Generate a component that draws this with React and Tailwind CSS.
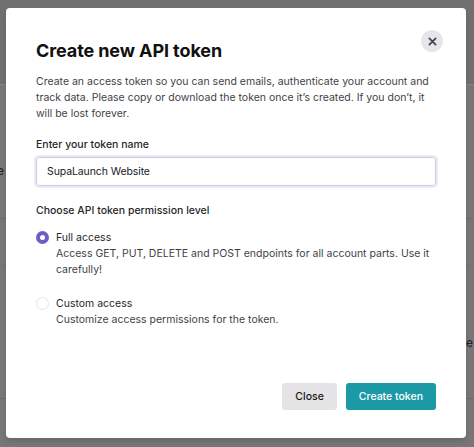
import React, { useState } from "react";

const CloseIcon = () => (
  <svg width="9" height="9" viewBox="0 0 10 10" fill="none">
    <path
      d="M1.5 1.5l7 7M8.5 1.5l-7 7"
      stroke="#3f3f46"
      strokeWidth="1.8"
      strokeLinecap="round"
    />
  </svg>
);

const Radio = ({ checked }) =>
  checked ? (
    <span className="mt-[1px] flex size-[13px] shrink-0 items-center justify-center rounded-full bg-[#6e5cc6]">
      <span className="size-[5px] rounded-full bg-white" />
    </span>
  ) : (
    <span className="mt-[1px] size-[13px] shrink-0 rounded-full border border-[#e4e4e7] bg-white" />
  );

const options = [
  {
    id: "full",
    title: "Full access",
    desc: "Access GET, PUT, DELETE and POST endpoints for all account parts. Use it carefully!",
  },
  {
    id: "custom",
    title: "Custom access",
    desc: "Customize access permissions for the token.",
  },
];

const App = () => {
  const [level, setLevel] = useState("full");
  const [name, setName] = useState("SupaLaunch Website");

  return (
    <div
      className="relative h-[447px] w-[474px] overflow-hidden bg-[#777777] pt-[8px] pl-[6px] text-[#27272a]"
      style={{ fontFamily: "Inter, 'Noto Sans', sans-serif" }}
    >
      {/* page behind the overlay */}
      <div className="absolute inset-x-0 top-0 h-[84px] bg-[#6f6f6f]" />
      <div className="absolute inset-x-0 top-[84px] h-px bg-[#858585]" />
      <div className="absolute inset-x-0 top-[218px] h-px bg-[#6a6a6a]" />
      <div className="absolute inset-x-0 top-[265px] h-px bg-[#707070]" />
      <div className="absolute inset-x-0 top-[398px] h-px bg-[#6a6a6a]" />
      <span className="absolute top-[162px] -left-[3px] text-[12px] text-[#222]">e</span>
      <span className="absolute top-[334px] left-[466px] text-[12px] text-[#222]">e</span>

      <div className="relative h-[430px] w-[460px] rounded-[4px] bg-white px-[30px] pt-[22px] text-[10.5px] leading-[16px] shadow-md">
        <div className="flex items-start justify-between">
          <h2 className="pt-[10px] text-[18px] leading-[22px] font-bold tracking-[-0.1px] text-[#111]">
            Create new API token
          </h2>
          <button className="-mr-[7px] flex size-[22px] items-center justify-center rounded-full bg-[#e6e6ea]">
            <CloseIcon />
          </button>
        </div>

        <p className="mt-[12px] text-[10.5px] whitespace-nowrap text-[#3f3f46]">
          Create an access token so you can send emails, authenticate your account and
          <br />
          track data. Please copy or download the token once it’s created. If you don’t, it
          <br />
          will be lost forever.
        </p>

        <label className="mt-[15px] block font-medium text-[#27272a]">
          Enter your token name
        </label>
        <input
          value={name}
          onChange={(e) => setName(e.target.value)}
          className="mt-[4px] h-[29px] w-[400px] rounded-[3px] border border-[#cfcbe6] px-[10px] tracking-[-0.1px] text-[#18181b] shadow-[0_0_0_2px_#ece9f8] outline-none"
        />

        <div className="mt-[17px] font-medium text-[#27272a]">
          Choose API token permission level
        </div>

        <div className="mt-[11px] flex flex-col gap-[18px]">
          {options.map((o) => (
            <div
              key={o.id}
              className="flex cursor-pointer items-start gap-[7px]"
              onClick={() => setLevel(o.id)}
            >
              <Radio checked={level === o.id} />
              <div className="text-[#3f3f46]">
                <div className="text-[#27272a]">{o.title}</div>
                <div className="max-w-[374px]">{o.desc}</div>
              </div>
            </div>
          ))}
        </div>

        <div className="mt-[55px] flex justify-end gap-[9px]">
          <button className="h-[27px] rounded-[3px] bg-[#e4e4e7] px-[13px] font-medium text-[#18181b]">
            Close
          </button>
          <button className="h-[27px] rounded-[3px] bg-[#1b9aa6] px-[13px] font-medium text-white">
            Create token
          </button>
        </div>
      </div>
    </div>
  );
};

export default App;
